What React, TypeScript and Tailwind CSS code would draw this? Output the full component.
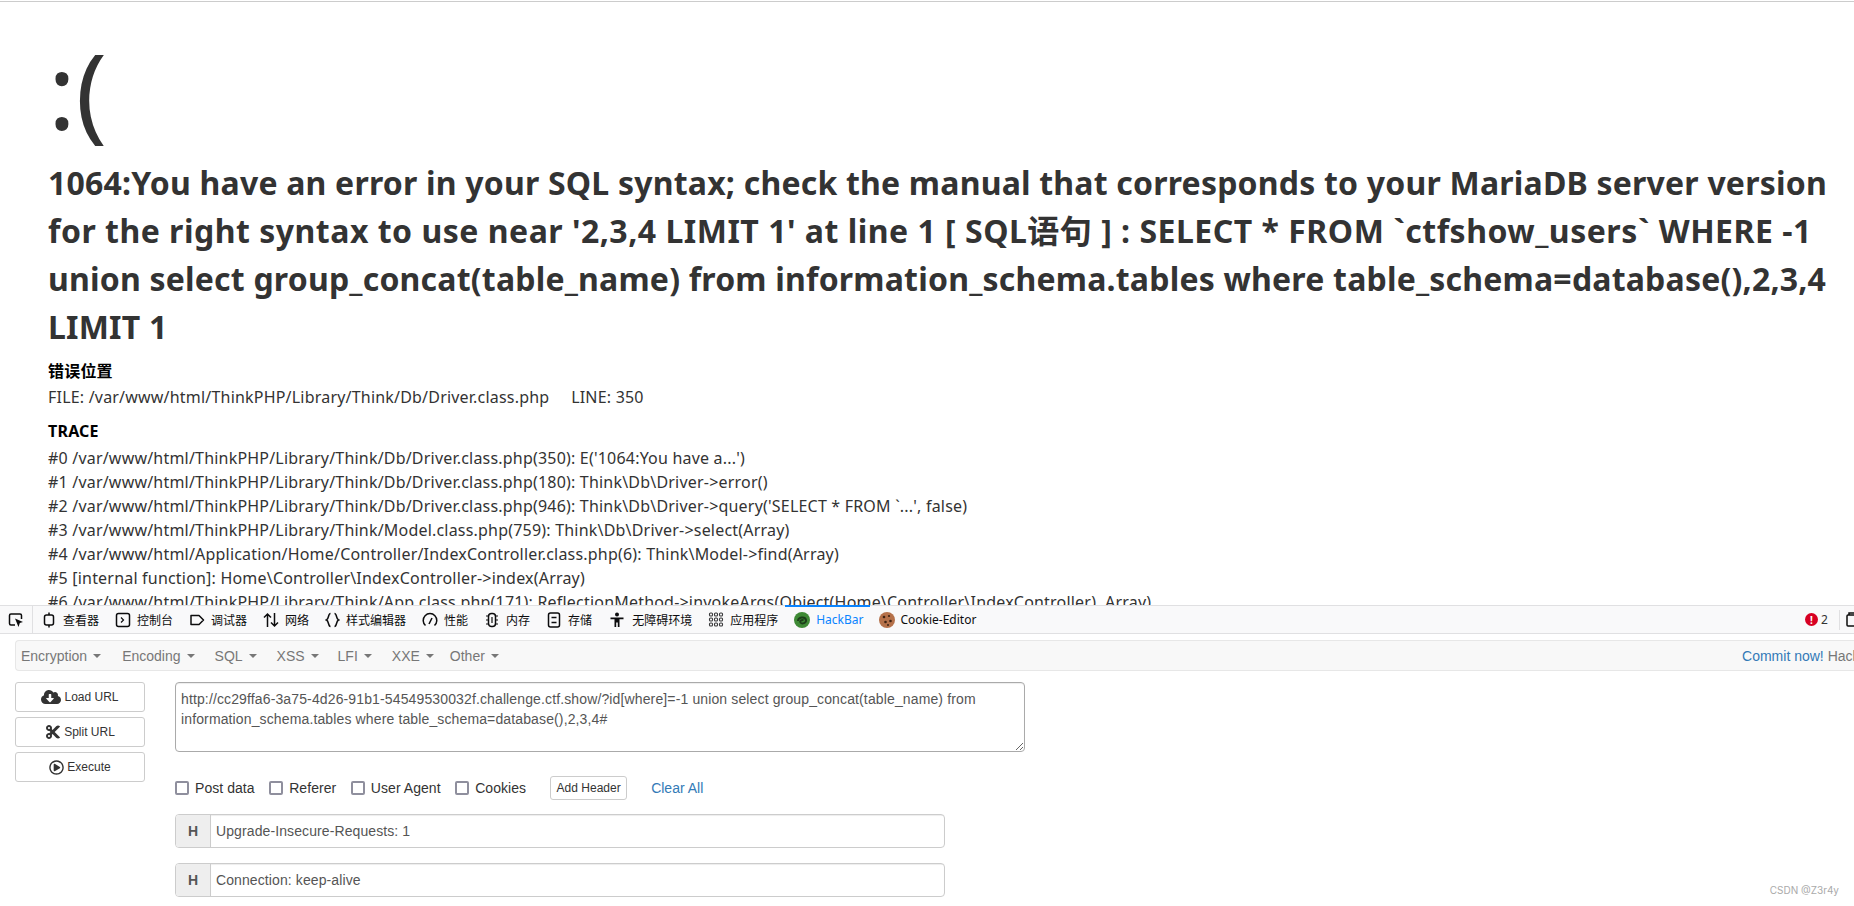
import { FaCloudDownloadAlt, FaCut, FaRegPlayCircle } from "react-icons/fa";
import type { ReactNode } from "react";

const headingLines = [
  { text: "1064:You have an error in your SQL syntax; check the manual that corresponds to your MariaDB server version", className: "tracking-[0.2px]" },
  { text: "for the right syntax to use near '2,3,4 LIMIT 1' at line 1 [ SQL语句 ] : SELECT * FROM `ctfshow_users` WHERE -1", className: "tracking-[0.5px]" },
  { text: "union select group_concat(table_name) from information_schema.tables where table_schema=database(),2,3,4", className: "tracking-[0.2px]" },
  { text: "LIMIT 1", className: "tracking-[0.2px]" },
];

const traceLines = [
  "#0 /var/www/html/ThinkPHP/Library/Think/Db/Driver.class.php(350): E('1064:You have a...')",
  "#1 /var/www/html/ThinkPHP/Library/Think/Db/Driver.class.php(180): Think\\Db\\Driver->error()",
  "#2 /var/www/html/ThinkPHP/Library/Think/Db/Driver.class.php(946): Think\\Db\\Driver->query('SELECT * FROM `...', false)",
  "#3 /var/www/html/ThinkPHP/Library/Think/Model.class.php(759): Think\\Db\\Driver->select(Array)",
  "#4 /var/www/html/Application/Home/Controller/IndexController.class.php(6): Think\\Model->find(Array)",
  "#5 [internal function]: Home\\Controller\\IndexController->index(Array)",
  "#6 /var/www/html/ThinkPHP/Library/Think/App.class.php(171): ReflectionMethod->invokeArgs(Object(Home\\Controller\\IndexController), Array)",
];

const navItems = [
  { label: "Encryption", className: "mr-[1px]" },
  { label: "Encoding", className: "" },
  { label: "SQL", className: "" },
  { label: "XSS", className: "" },
  { label: "LFI", className: "ml-[-1px]" },
  { label: "XXE", className: "mr-[-4px]" },
  { label: "Other", className: "" },
];

function Icon({ children, width = 16 }: { children: ReactNode; width?: number }) {
  return (
    <svg width={width} height="16" viewBox={`0 0 ${width} 16`} fill="none" stroke="#0c0c0d" strokeWidth="1.5" className="shrink-0">
      {children}
    </svg>
  );
}

const devtoolsTabs: { label: string; icon: ReactNode }[] = [
  {
    label: "查看器",
    icon: (
      <Icon>
        <rect x="3.5" y="3" width="9" height="10" rx="2" />
        <path d="M8 0.5V3M8 13v2.5" />
      </Icon>
    ),
  },
  {
    label: "控制台",
    icon: (
      <Icon>
        <rect x="1.5" y="1.5" width="13" height="13" rx="2" />
        <path d="M6 5.5 8.5 8 6 10.5" strokeWidth="1.2" />
      </Icon>
    ),
  },
  {
    label: "调试器",
    icon: (
      <Icon>
        <path d="M2 3.5h8l4.5 4.5-4.5 4.5H2z" strokeLinejoin="round" />
      </Icon>
    ),
  },
  {
    label: "网络",
    icon: (
      <Icon>
        <path d="M4.500 15V2M1 5.500 4.500 2 8 5.500M11.500 1v13M8 10.500l3.500 3.500 3.500-3.500" />
      </Icon>
    ),
  },
  {
    label: "样式编辑器",
    icon: (
      <Icon width={15}>
        <path d="M5.500 1.500C3 1.500 4 7 1.500 8 4 9 3 14.500 5.500 14.500M9.500 1.500c2.500 0 1.500 5.500 4 6.500-2.500 1-1.500 6.500-4 6.500" />
      </Icon>
    ),
  },
  {
    label: "性能",
    icon: (
      <Icon>
        <path d="M3.500 13.500a6.800 6.800 0 1 1 9 0" />
        <path d="M7 12 10 6" />
      </Icon>
    ),
  },
  {
    label: "内存",
    icon: (
      <Icon>
        <rect x="4.500" y="1.500" width="7" height="13" rx="3" />
        <path d="M2 4h2M2 8h2M2 12h2M12 4h2M12 8h2M12 12h2M8 5v6" strokeWidth="1.200" />
      </Icon>
    ),
  },
  {
    label: "存储",
    icon: (
      <Icon>
        <rect x="2.500" y="1" width="11" height="14" rx="2" />
        <path d="M5.500 5.500h5M5.500 10.500h5" />
      </Icon>
    ),
  },
  {
    label: "无障碍环境",
    icon: (
      <svg width="18" height="16" viewBox="0 0 16 16" fill="#0c0c0d" className="shrink-0">
        <circle cx="8" cy="2.500" r="2" />
        <path d="M1.500 5.500h13v1.700H10.500V15H8.800v-4.500H7.200V15H5.500V7.200H1.500z" />
      </svg>
    ),
  },
  {
    label: "应用程序",
    icon: (
      <svg width="16" height="16" viewBox="0 0 16 16" fill="none" stroke="#3a3a3c" strokeWidth="1.100" className="shrink-0">
        {[2.500, 7.500, 12.500].flatMap((y) =>
          [3, 8, 13].map((x) => <rect key={`${x}-${y}`} x={x - 1.500} y={y - 1.500} width="3" height="3" rx="1" />),
        )}
      </svg>
    ),
  },
];

function Tab({ label, icon }: { label: string; icon: ReactNode }) {
  return (
    <div className="flex items-center gap-[6px] whitespace-nowrap">
      {icon}
      <span>{label}</span>
    </div>
  );
}

function Caret() {
  return <span className="ml-[6px] inline-block h-0 w-0 border-x-4 border-t-4 border-x-transparent border-t-[#777] align-middle" />;
}

function HackButton({ icon, label }: { icon: ReactNode; label: string }) {
  return (
    <button className="flex h-[30px] w-[130px] items-center justify-center gap-[3px] rounded-[3px] border border-[#ccc] bg-white text-[12px] text-[#333]">
      {icon}
      {label}
    </button>
  );
}

function CheckItem({ label }: { label: string }) {
  return (
    <label className="flex items-center gap-[6px] text-[14px] tracking-[0.05px] text-[#333]">
      <span className="block h-[14px] w-[14px] rounded-[2px] border-2 border-[#8f8f9d] bg-white" />
      {label}
    </label>
  );
}

function HeaderRow({ value }: { value: string }) {
  return (
    <div className="flex h-[34px] w-[770px] overflow-hidden rounded-[4px] border border-[#ccc]">
      <span className="flex w-[35px] shrink-0 items-center justify-center border-r border-[#ccc] bg-[#eee] text-[14px] font-bold text-[#555]">H</span>
      <span className="flex flex-1 items-center pl-[5px] text-[14px] tracking-[0.1px] text-[#555] shadow-[inset_0_1px_1px_rgba(0,0,0,0.075)]">{value}</span>
    </div>
  );
}

export default function App() {
  return (
    <div className="relative flex h-[906px] w-[1854px] flex-col overflow-hidden bg-white font-['Liberation_Sans',sans-serif]">
      <div className="mt-px h-px shrink-0 bg-[#ccc]" />

      <div className="min-h-0 flex-1 overflow-hidden pl-[48px] pt-[28px] font-['Noto_Sans','Noto_Sans_CJK_SC',sans-serif] text-[#333]">
        <p className="mb-[9px] text-[104px] leading-[120px]">:(</p>
        <h1 className="text-[32px] font-bold leading-[48px] whitespace-nowrap">
          {headingLines.map((line) => (
            <div key={line.text} className={line.className}>{line.text}</div>
          ))}
        </h1>
        <div className="pt-[9px] text-[16px] tracking-[0.2px]">
          <div className="mb-[11px]">
            <h3 className="mb-[3px] text-[16px] leading-[22px] font-bold text-black">错误位置</h3>
            <div className="leading-[24px]">FILE: /var/www/html/ThinkPHP/Library/Think/Db/Driver.class.php &nbsp;&nbsp;&nbsp;&nbsp;LINE: 350</div>
          </div>
          <div>
            <h3 className="mb-[4px] text-[16px] leading-[22px] font-bold text-black">TRACE</h3>
            {traceLines.map((line) => (
              <div key={line} className="leading-[24px] whitespace-nowrap">{line}</div>
            ))}
          </div>
        </div>
      </div>

      <div className="flex h-[301px] shrink-0 flex-col border-t border-[#e0e0e2] bg-white">
        <div className="relative flex h-[28px] shrink-0 items-center border-b border-[#e0e0e2] bg-[#f9f9fa] text-[12px] text-[#0c0c0d] font-['Noto_Sans_CJK_SC',sans-serif]">
          <div className="flex w-[33px] shrink-0 items-center justify-center self-stretch border-r border-[#e0e0e2]">
            <svg width="16" height="16" viewBox="0 0 16 16" fill="none" stroke="#0c0c0d" strokeWidth="1.500">
              <path d="M7 13H3a1.500 1.500 0 0 1-1.500-1.500v-8A1.500 1.500 0 0 1 3 2h9a1.500 1.500 0 0 1 1.500 1.500V7" />
              <path d="M7 6.500 15 10l-3.200 1L10.500 15z" fill="#0c0c0d" stroke="none" />
            </svg>
          </div>
          <div className="ml-[8px] flex items-center gap-[16px]">
            {devtoolsTabs.map((tab) => (
              <Tab key={tab.label} {...tab} />
            ))}
            <div className="flex items-center gap-[6px] text-[#0a84ff]">
              <svg width="16" height="16" viewBox="0 0 16 16" className="shrink-0">
                <circle cx="8" cy="8" r="8" fill="#3f8a35" />
                <path d="M4 9c0-4 7-5 8-1 .5 3-4 4.500-5.500 2.500C5.500 9 8 7 9.500 8.500" fill="none" stroke="#1d3f1a" strokeWidth="2" />
              </svg>
              <span className="font-['Noto_Sans',sans-serif]">HackBar</span>
            </div>
            <div className="flex items-center gap-[5px]">
              <svg width="16" height="16" viewBox="0 0 16 16" className="shrink-0">
                <circle cx="8" cy="8" r="8" fill="#b5714a" />
                <circle cx="5" cy="5" r="1.300" fill="#3d2314" />
                <circle cx="10" cy="4" r="1.100" fill="#3d2314" />
                <circle cx="11.500" cy="9" r="1.300" fill="#3d2314" />
                <circle cx="6.500" cy="10" r="1.300" fill="#3d2314" />
                <circle cx="9" cy="13" r="1" fill="#3d2314" />
              </svg>
              <span className="font-['Noto_Sans',sans-serif]">Cookie-Editor</span>
            </div>
          </div>
          <div className="ml-auto flex items-center self-stretch font-['Noto_Sans',sans-serif]">
            <span className="flex h-[13px] w-[13px] items-center justify-center rounded-full bg-[#d70022] text-[10px] leading-none font-bold text-white">!</span>
            <span className="ml-[3px] w-[12px] text-[#333]">2</span>
            <span className="mx-[6px] h-[20px] w-px bg-[#e0e0e2]" />
            <svg width="8" height="16" viewBox="0 0 8 16" fill="none" stroke="#0c0c0d" strokeWidth="1.500" className="shrink-0">
              <path d="M8 3H2a1 1 0 0 0-1 1v9a1 1 0 0 0 1 1h6M3 3V1h5" />
            </svg>
          </div>
          <span className="absolute left-[785px] top-[-1px] h-[2px] w-[85px] bg-[#0a84ff]" />
        </div>

        <div className="mt-[6px] ml-[15px] flex h-[31px] shrink-0 items-center overflow-hidden rounded-l-[4px] border-y border-l border-[#e7e7e7] bg-[#f8f8f8] pt-px text-[14px] text-[#777]">
          <div className="flex items-center gap-[20px] pl-[5px]">
            {navItems.map((item) => (
              <span key={item.label} className={`flex items-center ${item.className}`}>
                {item.label}
                <Caret />
              </span>
            ))}
          </div>
          <span className="ml-auto mr-[-46px] shrink-0 whitespace-nowrap">
            <span className="text-[#337ab7]">Commit now!</span> HackBar v2
          </span>
        </div>

        <div className="flex min-h-0 flex-1 gap-[30px] pl-[15px] pt-[11px]">
          <div className="flex flex-col gap-[5px]">
            <HackButton icon={<FaCloudDownloadAlt className="text-[20px] text-[#333]" />} label="Load URL" />
            <HackButton icon={<FaCut className="text-[16px] text-[#333]" />} label="Split URL" />
            <HackButton icon={<FaRegPlayCircle className="text-[15px] text-[#333]" />} label="Execute" />
          </div>
          <div className="flex flex-col">
            <textarea
              readOnly
              className="h-[70px] w-[850px] resize-y rounded-[4px] border border-[#aaa] px-[5px] py-[6px] text-[14px] leading-[20px] tracking-[0.13px] text-[#555] shadow-[inset_0_1px_1px_rgba(0,0,0,0.075)] outline-none"
              defaultValue="http://cc29ffa6-3a75-4d26-91b1-54549530032f.challenge.ctf.show/?id[where]=-1 union select group_concat(table_name) from information_schema.tables where table_schema=database(),2,3,4#"
            />
            <div className="mt-[23px] flex h-[26px] items-center">
              <div className="flex items-center gap-[14.6px]">
                <CheckItem label="Post data" />
                <CheckItem label="Referer" />
                <CheckItem label="User Agent" />
                <CheckItem label="Cookies" />
              </div>
              <button className="ml-[24px] h-[24px] w-[77px] rounded-[3px] border border-[#ccc] text-[12px] text-[#333]">Add Header</button>
              <span className="ml-[24px] text-[14px] text-[#337ab7]">Clear All</span>
            </div>
            <div className="mt-[13px] flex flex-col gap-[15px]">
              <HeaderRow value="Upgrade-Insecure-Requests: 1" />
              <HeaderRow value="Connection: keep-alive" />
            </div>
          </div>
        </div>
      </div>

      <span className="absolute right-[15px] bottom-[8px] text-[10px] text-[#aaa] font-['Inter',sans-serif]">CSDN @Z3r4y</span>
    </div>
  );
}
